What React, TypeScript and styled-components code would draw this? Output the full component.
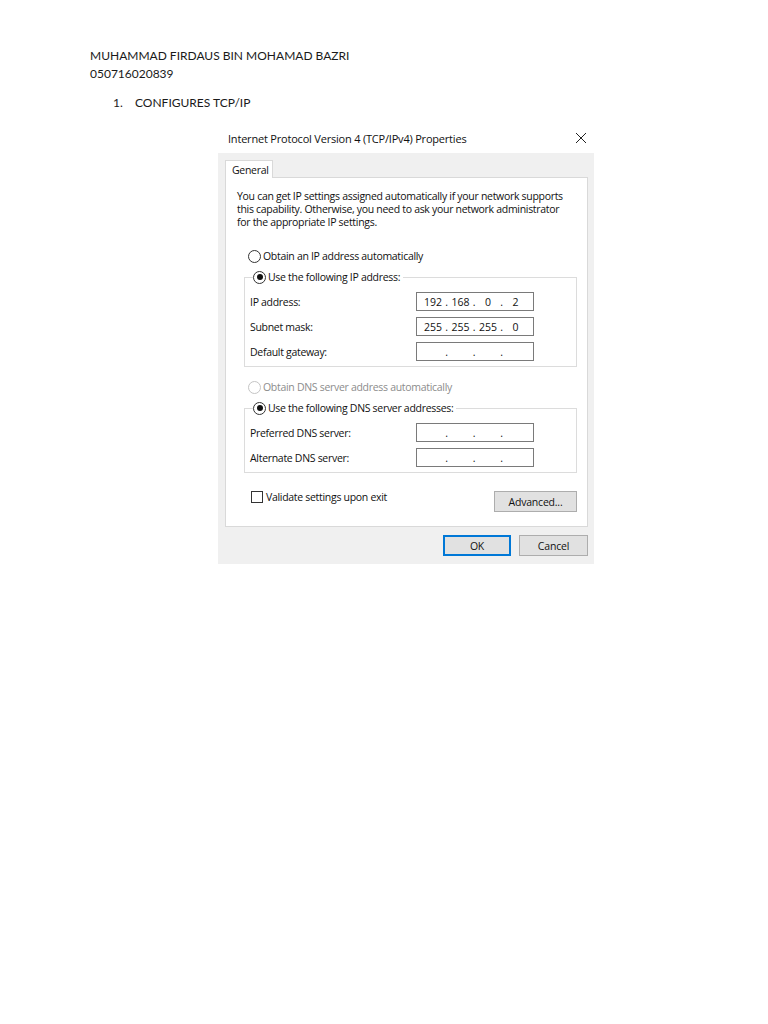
import React from "react";
import styled, { createGlobalStyle } from "styled-components";

const Global = createGlobalStyle`
  html, body { margin: 0; padding: 0; background: #ffffff; }
  body { font-family: Lato, "Liberation Sans", sans-serif; color: #1a1a1a; }
`;

const Page = styled.div`
  padding: 47px 0 0 90px;
  width: 768px;
  height: 1024px;
  box-sizing: border-box;
  background: #fff;
`;

const DocLine = styled.div`
  font-family: Lato, "Liberation Sans", sans-serif;
  font-size: 12px;
  line-height: 18px;
  color: #1a1a1a;
`;

const ListItem = styled.div`
  display: flex;
  margin-top: 11px;
  padding-left: 23px;
  font-family: Lato, "Liberation Sans", sans-serif;
  font-size: 12px;
  line-height: 18px;
  color: #1a1a1a;
`;

const ListNum = styled.span`
  width: 22px;
`;

const Dialog = styled.div`
  margin: 11px 0 0 128px;
  width: 376px;
  font-family: "Open Sans", "Noto Sans", sans-serif;
  font-size: 10.5px;
  letter-spacing: -0.3px;
  color: #111;
  background: #f0f0f0;
  white-space: nowrap;
`;

const TitleBar = styled.div`
  height: 30px;
  background: #fff;
  display: flex;
  align-items: center;
  justify-content: space-between;
  padding: 0 7px 0 10px;
  font-size: 11px;
  letter-spacing: -0.2px;
`;

const Body = styled.div`
  padding: 6px 6px 8px 7px;
`;

const Tab = styled.div`
  display: inline-block;
  height: 18px;
  line-height: 18px;
  padding: 0 6px;
  width: 48px;
  box-sizing: border-box;
  background: #fff;
  border: 1px solid #d9d9d9;
  border-bottom: none;
  position: relative;
  top: 1px;
`;

const Panel = styled.div`
  background: #fff;
  border: 1px solid #d9d9d9;
  height: 350px;
  box-sizing: border-box;
  padding: 12px 10px 0 11px;
`;

const Para = styled.p`
  margin: 0;
  line-height: 13px;
`;

const RadioRow = styled.label<{ $top: number; $disabled?: boolean }>`
  display: flex;
  align-items: center;
  height: 14px;
  margin: ${(p) => p.$top}px 0 0 11px;
  color: ${(p) => (p.$disabled ? "#8c8c8c" : "#111")};
`;

const RadioDot = styled.span<{ $checked?: boolean; $disabled?: boolean }>`
  width: 11px;
  height: 11px;
  border-radius: 50%;
  border: 1px solid ${(p) => (p.$disabled ? "#c4c4c4" : "#333")};
  margin-right: 2px;
  display: flex;
  align-items: center;
  justify-content: center;
  background: #fff;
  &::after {
    content: "";
    width: 6px;
    height: 6px;
    border-radius: 50%;
    background: ${(p) => (p.$checked ? "#111" : "transparent")};
  }
`;

const Group = styled.fieldset<{ $top: number }>`
  margin: ${(p) => p.$top}px 0 0 7px;
  width: 333px;
  box-sizing: border-box;
  border: 1px solid #dcdcdc;
  padding: 8px 42px 5px 5px;
  display: flex;
  flex-direction: column;
  gap: 6px;
`;

const Legend = styled.legend`
  padding: 0 3px 0 0;
  margin-left: 3px;
  height: 14px;
  display: flex;
  align-items: center;
`;

const FieldRow = styled.div`
  display: flex;
  align-items: center;
  justify-content: space-between;
  height: 19px;
`;

const IpBox = styled.div`
  width: 118px;
  height: 19px;
  box-sizing: border-box;
  border: 1px solid #7a7a7a;
  display: flex;
  align-items: center;
  padding-left: 5px;
  letter-spacing: 0;
`;

const Seg = styled.span`
  width: 22px;
  text-align: center;
`;

const Dot = styled.span`
  width: 5.5px;
  text-align: center;
`;

const BottomRow = styled.div`
  display: flex;
  justify-content: space-between;
  align-items: flex-start;
  margin-top: 18px;
  padding: 0 0 0 14px;
`;

const CheckLabel = styled.label`
  display: flex;
  align-items: center;
  height: 12px;
`;

const CheckBox = styled.span`
  width: 12px;
  height: 12px;
  box-sizing: border-box;
  border: 1px solid #333;
  background: #fff;
  margin-right: 3px;
`;

const Button = styled.button<{ $primary?: boolean; $w: number }>`
  width: ${(p) => p.$w}px;
  height: 21px;
  box-sizing: border-box;
  background: #e1e1e1;
  border: ${(p) => (p.$primary ? "2px solid #0078d7" : "1px solid #adadad")};
  font-family: "Open Sans", "Noto Sans", sans-serif;
  font-size: 10.5px;
  letter-spacing: -0.2px;
  color: #111;
  padding: 0;
  display: flex;
  align-items: center;
  justify-content: center;
`;

const Footer = styled.div`
  display: flex;
  justify-content: flex-end;
  gap: 8px;
  margin-top: 8px;
`;

const CloseIcon = () => (
  <svg width="12" height="12" viewBox="0 0 12 12">
    <path d="M1 1L11 11M11 1L1 11" stroke="#222" strokeWidth="1" fill="none" />
  </svg>
);

const Ip = ({ parts }: { parts: string[] }) => (
  <IpBox>
    <Seg>{parts[0]}</Seg>
    <Dot>.</Dot>
    <Seg>{parts[1]}</Seg>
    <Dot>.</Dot>
    <Seg>{parts[2]}</Seg>
    <Dot>.</Dot>
    <Seg>{parts[3]}</Seg>
  </IpBox>
);

const Field = ({ label, parts }: { label: string; parts: string[] }) => (
  <FieldRow>
    <span>{label}</span>
    <Ip parts={parts} />
  </FieldRow>
);

export default function App() {
  const empty = ["", "", "", ""];
  return (
    <Page>
      <Global />
      <DocLine>MUHAMMAD FIRDAUS BIN MOHAMAD BAZRI</DocLine>
      <DocLine>050716020839</DocLine>
      <ListItem>
        <ListNum>1.</ListNum>
        <span>CONFIGURES TCP/IP</span>
      </ListItem>
      <Dialog>
        <TitleBar>
          <span>Internet Protocol Version 4 (TCP/IPv4) Properties</span>
          <CloseIcon />
        </TitleBar>
        <Body>
          <Tab>General</Tab>
          <Panel>
            <Para>
              You can get IP settings assigned automatically if your network supports
              <br />
              this capability. Otherwise, you need to ask your network administrator
              <br />
              for the appropriate IP settings.
            </Para>
            <RadioRow $top={20}>
              <RadioDot />
              Obtain an IP address automatically
            </RadioRow>
            <Group $top={7}>
              <Legend>
                <RadioDot $checked />
                Use the following IP address:
              </Legend>
              <Field label="IP address:" parts={["192", "168", "0", "2"]} />
              <Field label="Subnet mask:" parts={["255", "255", "255", "0"]} />
              <Field label="Default gateway:" parts={empty} />
            </Group>
            <RadioRow $top={13} $disabled>
              <RadioDot $disabled />
              Obtain DNS server address automatically
            </RadioRow>
            <Group $top={7}>
              <Legend>
                <RadioDot $checked />
                Use the following DNS server addresses:
              </Legend>
              <Field label="Preferred DNS server:" parts={empty} />
              <Field label="Alternate DNS server:" parts={empty} />
            </Group>
            <BottomRow>
              <CheckLabel>
                <CheckBox />
                Validate settings upon exit
              </CheckLabel>
              <Button $w={83}>Advanced...</Button>
            </BottomRow>
          </Panel>
          <Footer>
            <Button $primary $w={68}>OK</Button>
            <Button $w={69}>Cancel</Button>
          </Footer>
        </Body>
      </Dialog>
    </Page>
  );
}
